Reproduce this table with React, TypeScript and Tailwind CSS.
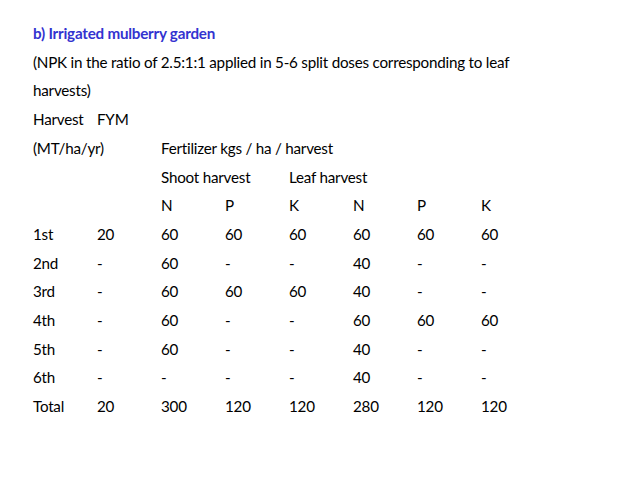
import React from "react";

const rows: string[][] = [
  ["", "", "N", "P", "K", "N", "P", "K"],
  ["1st", "20", "60", "60", "60", "60", "60", "60"],
  ["2nd", "-", "60", "-", "-", "40", "-", "-"],
  ["3rd", "-", "60", "60", "60", "40", "-", "-"],
  ["4th", "-", "60", "-", "-", "60", "60", "60"],
  ["5th", "-", "60", "-", "-", "40", "-", "-"],
  ["6th", "-", "-", "-", "-", "40", "-", "-"],
  ["Total", "20", "300", "120", "120", "280", "120", "120"],
];

export default function App() {
  return (
    <div
      className="w-[638px] h-[478px] bg-white text-black pl-[33px] pt-[19px] text-[15.2px] tracking-[-0.22px] leading-[28.7px]"
      style={{ fontFamily: "Lato, 'Open Sans', sans-serif" }}
    >
      <div className="font-bold text-[#3333d0]">b) Irrigated mulberry garden</div>
      <div>(NPK in the ratio of 2.5:1:1 applied in 5-6 split doses corresponding to leaf</div>
      <div>harvests)</div>
      <div className="grid grid-cols-[64px_64px_64px_64px_64px_64px_64px_64px]">
        {/* header lines */}
        <div>Harvest</div>
        <div className="col-span-7">FYM</div>
        <div className="col-span-2">(MT/ha/yr)</div>
        <div className="col-span-6">Fertilizer kgs / ha / harvest</div>
        <div className="col-span-2"></div>
        <div className="col-span-2">Shoot harvest</div>
        <div className="col-span-4">Leaf harvest</div>
        {rows.map((r, i) =>
          r.map((c, j) => (
            <div key={i + "-" + j} className="h-[28.7px]">
              {c}
            </div>
          ))
        )}
      </div>
    </div>
  );
}
